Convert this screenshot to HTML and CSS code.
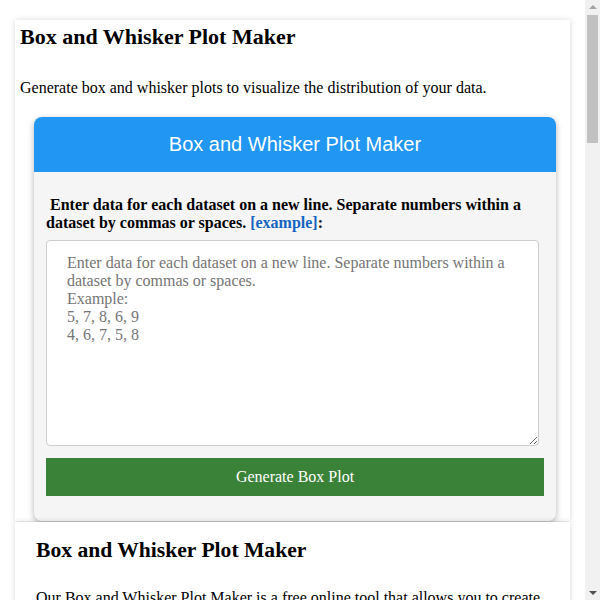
FILE: index.html
```html
<!DOCTYPE html>
<html>
<head>
<meta charset="UTF-8">
<title>Box and Whisker Plot Maker</title>
<link rel="stylesheet" href="styles.css">
</head>
<body>
<div class="page">
	<div class="card">
		<h1>Box and Whisker Plot Maker</h1>
		<p class="intro">Generate box and whisker plots to visualize the distribution of your data.</p>
		<div class="tool">
			<div class="tool_head">Box and Whisker Plot Maker</div>
			<div class="tool_body">
				<label for="data">&nbsp;Enter data for each dataset on a new line. Separate numbers within a dataset by commas or spaces. <a href="javascript:;">[example]</a>:</label>
				<textarea id="data" placeholder="Enter data for each dataset on a new line. Separate numbers within a dataset by commas or spaces.
Example:
5, 7, 8, 6, 9
4, 6, 7, 5, 8"></textarea>
				<button type="button">Generate Box Plot</button>
			</div>
		</div>
	</div>
	<div class="card about">
		<h2>Box and Whisker Plot Maker</h2>
		<p>Our Box and Whisker Plot Maker is a free online tool that allows you to create box and whisker plots from your data quickly and easily. Simply enter your datasets, one per line, and click the button to see the result.</p>
		<h3>How to use it</h3>
		<p>Type or paste your numbers into the box above. Each line is read as a separate dataset, and the numbers on a line can be separated by commas or spaces. Press "Generate Box Plot" and the chart is drawn below the form.</p>
		<h3>What a box plot shows</h3>
		<p>A box plot summarises a dataset with five numbers: the minimum, the first quartile, the median, the third quartile and the maximum. The box spans the middle half of the data, the line inside it marks the median, and the whiskers reach out to the smallest and largest values.</p>
		<h3>Comparing datasets</h3>
		<p>When you enter more than one dataset, the plots are drawn side by side on the same scale, so you can compare the centre, the spread and the skew of each group at a glance.</p>
		<h3>Outliers</h3>
		<p>Values that lie more than one and a half times the interquartile range below the first quartile or above the third quartile are marked as outliers and shown as single points.</p>
	</div>
</div>
<!-- window scrollbar -->
<div class="scrollbar">
	<span class="arrow up"></span>
	<span class="thumb"></span>
	<span class="arrow down"></span>
</div>
<script>
	document.querySelector('.tool_body button').onclick = function(){
		var box = document.getElementById('data');
		if(!box.value){
			box.value = box.placeholder.split('Example:\n')[1];
		}
	}
</script>
</body>
</html>
```

FILE: styles.css
```css
*{margin: 0;padding: 0;box-sizing: border-box;}
body{
	font-family: "Liberation Serif", "Times New Roman", serif;
	font-size: 16px;
	color: #000;
	background: #fff;
	padding-right: 15px;
}
.page{
	padding: 20px 15px 20px;
}
.card{
	background: #fff;
	box-shadow: 0 0 6px rgba(0,0,0,0.15);
	padding: 3px 5px 0;
}
.card h1{
	font-size: 22px;
	line-height: 28px;
}
.intro{
	margin: 28px 0 20px;
	line-height: 18px;
}
.tool{
	width: 522px;
	margin-left: 14px;
	background: #f5f5f5;
	border-radius: 8px;
	overflow: hidden;
	box-shadow: 0 2px 6px rgba(0,0,0,0.3);
}
.tool_head{
	background: #2196f3;
	color: #fff;
	font-family: "Liberation Sans", Arial, sans-serif;
	font-size: 20px;
	height: 55px;
	line-height: 55px;
	text-align: center;
}
.tool_body{
	padding: 24px 12px 25px;
}
.tool_body label{
	display: block;
	font-weight: bold;
	line-height: 18px;
	margin-bottom: 8px;
}
.tool_body label a{
	color: #1565c0;
	text-decoration: none;
}
.tool_body textarea{
	display: block;
	width: 493px;
	height: 206px;
	padding: 13px 20px 10px;
	border: 1px solid #ccc;
	border-radius: 4px;
	font-family: "Liberation Serif", "Times New Roman", serif;
	font-size: 16px;
	line-height: 18px;
	background: #fff;
}
.tool_body button{
	display: block;
	width: 100%;
	height: 38px;
	margin-top: 12px;
	border: 0;
	background: #3b8239;
	color: #fff;
	font-family: "Liberation Serif", "Times New Roman", serif;
	font-size: 16px;
}
.about{
	padding: 14px 21px 20px;
	margin-top: 1px;
	min-height: 2110px;
}
.about h2{
	font-size: 21.6px;
	line-height: 28px;
}
.about h3{
	font-size: 18px;
	margin-top: 28px;
}
.about p{
	margin-top: 24px;
	line-height: 20px;
}
.about h3 + p{
	margin-top: 12px;
}
/* fake window scrollbar */
.scrollbar{
	position: fixed;
	top: 0;
	right: 0;
	width: 15px;
	height: 100%;
	background: #f1f1f1;
	display: flex;
	flex-direction: column;
	align-items: center;
}
.scrollbar .arrow{
	width: 0;
	height: 0;
	border-left: 4px solid transparent;
	border-right: 4px solid transparent;
}
.scrollbar .up{
	border-bottom: 4px solid #a3a3a3;
	margin: 5px 0 6px;
}
.scrollbar .thumb{
	width: 11px;
	height: 128px;
	background: #c1c1c1;
}
.scrollbar .down{
	border-top: 4px solid #505050;
	margin: auto 0 5px;
}
```
